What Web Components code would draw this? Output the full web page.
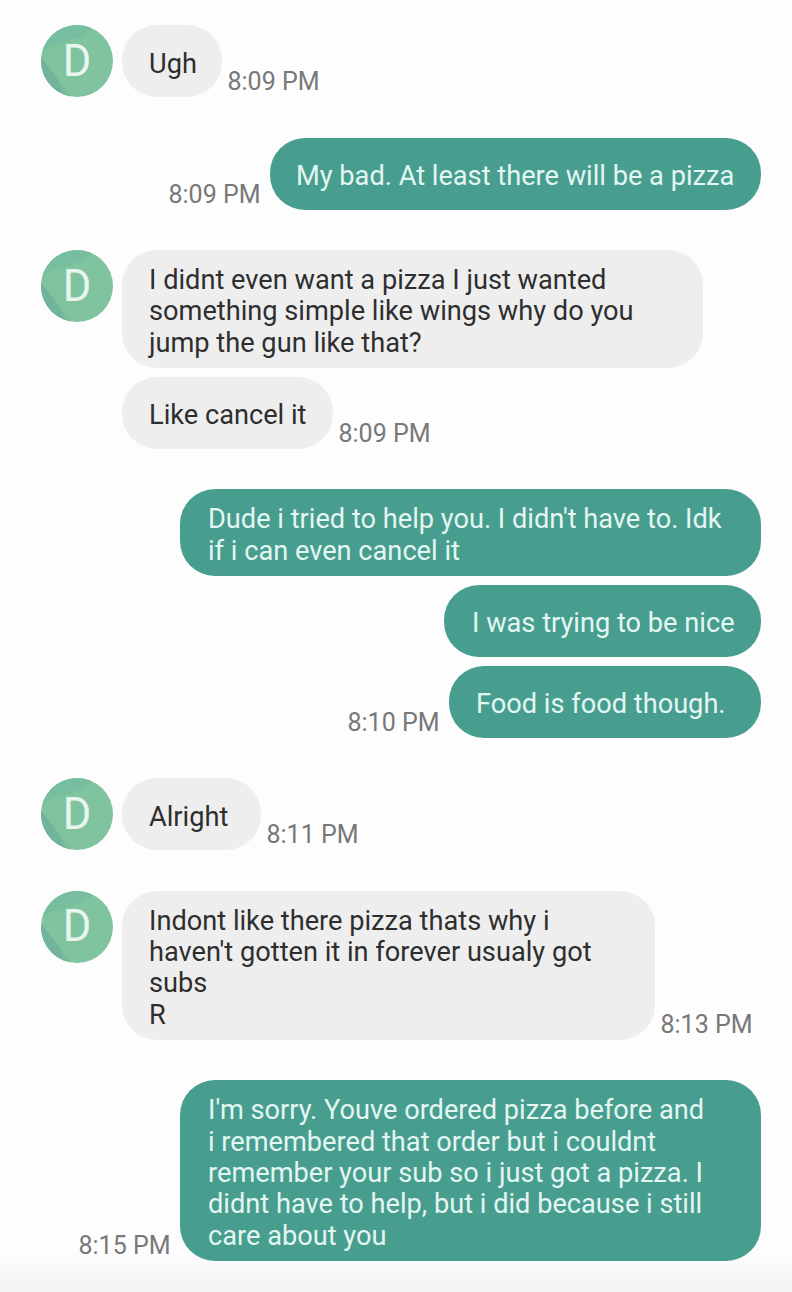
<!DOCTYPE html>
<html><head><meta charset="utf-8"><style>
html,body{margin:0;padding:0}
body{width:792px;height:1292px;overflow:hidden;background:linear-gradient(to bottom,#fdfdfd 0,#fdfdfd 1250px,#f3f3f3 1292px);font-family:Roboto,sans-serif}
</style></head><body>
<chat-log>
<msg-group>
<msg-row kind="in" avatar width="100" time="8:09 PM">Ugh</msg-row>
</msg-group>
<msg-group>
<msg-row kind="out" width="491" pad="26" time="8:09 PM">My bad. At least there will be a pizza</msg-row>
</msg-group>
<msg-group>
<msg-row kind="in" avatar width="581">I didnt even want a pizza I just wanted<br>something simple like wings why do you<br>jump the gun like that?</msg-row>
<msg-row kind="in" width="211" time="8:09 PM">Like cancel it</msg-row>
</msg-group>
<msg-group>
<msg-row kind="out" width="581" pad="28">Dude i tried to help you. I didn't have to. Idk<br>if i can even cancel it</msg-row>
<msg-row kind="out" width="317" pad="28">I was trying to be nice</msg-row>
<msg-row kind="out" width="312" time="8:10 PM">Food is food though.</msg-row>
</msg-group>
<msg-group>
<msg-row kind="in" avatar width="139" time="8:11 PM">Alright</msg-row>
</msg-group>
<msg-group>
<msg-row kind="in" avatar width="533" time="8:13 PM">Indont like there pizza thats why i<br>haven't gotten it in forever usualy got<br>subs<br>R</msg-row>
</msg-group>
<msg-group>
<msg-row kind="out" width="581" pad="28" time="8:15 PM">I'm sorry. Youve ordered pizza before and<br>i remembered that order but i couldnt<br>remember your sub so i just got a pizza. I<br>didnt have to help, but i did because i still<br>care about you</msg-row>
</msg-group>
</chat-log>
<script>
class ChatLog extends HTMLElement{constructor(){super();this.attachShadow({mode:'open'}).innerHTML=`<style>:host{display:flex;flex-direction:column;gap:40.5px;padding:25px 31px 0 41px;box-sizing:border-box;width:792px}</style><slot></slot>`}}
class MsgGroup extends HTMLElement{constructor(){super();this.attachShadow({mode:'open'}).innerHTML=`<style>:host{display:flex;flex-direction:column;gap:9px}</style><slot></slot>`}}
class ChatAvatar extends HTMLElement{constructor(){super();this.attachShadow({mode:'open'}).innerHTML=`<style>:host{display:block;width:72px;height:72px;flex:none;position:relative}svg{display:block}span{position:absolute;inset:0;display:flex;align-items:center;justify-content:center;color:#e8f6ee;font:400 43.5px/75px Roboto,sans-serif}</style>
<svg width="72" height="72" viewBox="0 0 72 72"><defs><clipPath id="c"><circle cx="36" cy="36" r="36"/></clipPath></defs><g clip-path="url(#c)"><rect width="72" height="72" fill="#7fc49e"/><path d="M0 29C6 22 12 20 20 18C30 15 40 12 48 7L52 0H0Z" fill="#77bea0"/><path d="M0 32L30 72H0Z" fill="#72b39b"/><path d="M18 56L30 72H23Z" fill="#79bb9d"/></g></svg><span>D</span>`}}
class MsgRow extends HTMLElement{constructor(){super();const k=this.getAttribute('kind'),w=this.getAttribute('width'),t=this.getAttribute('time'),a=this.hasAttribute('avatar'),p=this.getAttribute('pad')||27;
const out=k==='out';
this.attachShadow({mode:'open'}).innerHTML=`<style>
:host{display:flex;align-items:flex-end;justify-content:${out?'flex-end':'flex-start'};font:400 27.2px/31.4px Roboto,sans-serif}
.slot{width:72px;flex:none;margin-right:9px;align-self:flex-start}
.b{box-sizing:border-box;min-height:72px;padding:15px ${p}px 8.5px;display:flex;align-items:center;white-space:nowrap;${w?`width:${w}px;`:''}border-radius:35px;background:${out?'#479e8f':'#eeeeee'};color:${out?'#e4f6f1':'#2e2e2e'}}
.t{color:#787878;font-size:25px;line-height:30px;white-space:nowrap;${out?'margin-right:9.5px':'margin-left:5.5px'}}
</style>${out?'':`<div class="slot">${a?'<chat-avatar></chat-avatar>':''}</div>`}${out&&t?`<div class="t">${t}</div>`:''}<div class="b"><div><slot></slot></div></div>${!out&&t?`<div class="t">${t}</div>`:''}`;
}}
customElements.define('chat-avatar',ChatAvatar);customElements.define('msg-row',MsgRow);customElements.define('msg-group',MsgGroup);customElements.define('chat-log',ChatLog);
</script>
</body></html>
